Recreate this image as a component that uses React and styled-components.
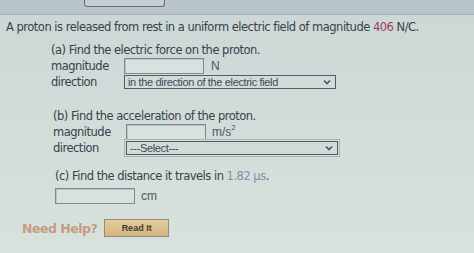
import React from "react";
import styled, { createGlobalStyle } from "styled-components";

const Global = createGlobalStyle`
  html, body { margin: 0; padding: 0; }
  body { background: #cfd8d5; }
`;

const Page = styled.div`
  width: 474px;
  height: 253px;
  overflow: hidden;
  background: linear-gradient(180deg, #ccd6d5 0%, #d3dcd9 50%, #d9e1dd 100%);
  font-family: "DejaVu Sans", Verdana, sans-serif;
  color: #35424c;
`;

const TopStrip = styled.div`
  height: 15px;
  background: #bac4cb;
  border-bottom: 1px solid #a8b2b9;
  padding-left: 84px;
  box-sizing: border-box;
`;

const TopButton = styled.div`
  width: 79px;
  height: 6px;
  border: 1px solid #5f6e7a;
  border-top: none;
  border-radius: 0 0 3px 3px;
  background: #c6ced4;
`;

const Body = styled.div`
  padding: 5px 0 0 6px;
`;

const Text = styled.div`
  font-size: 11.5px;
  letter-spacing: -0.5px;
  line-height: 15px;
`;

const Red = styled.span`
  color: ${(p) => p.$c || "#9b3d5e"};
`;

const Part = styled.div`
  padding-left: ${(p) => p.$indent || 45}px;
  margin-top: ${(p) => p.$top || 0}px;
`;

const PartTitle = styled(Text)`
  margin-bottom: ${(p) => p.$gap || 0}px;
`;

const Row = styled.div`
  display: flex;
  align-items: center;
  height: ${(p) => p.$h || 16}px;
`;

const Label = styled.div`
  width: 73px;
  font-size: 11.5px;
  letter-spacing: -0.5px;
`;

const Input = styled.div`
  width: 78px;
  height: 14px;
  border: 1px solid #7a8994;
  background: #d9e1df;
  box-shadow: inset 1px 1px 0 #b8c3c6;
`;

const Unit = styled.div`
  margin-left: ${(p) => p.$gap || 6}px;
  font-family: "Liberation Sans", Arial, sans-serif;
  font-size: 12px;
  color: #4a5660;
`;

const Sup = styled.sup`
  font-size: 8px;
  vertical-align: 6px;
  line-height: 0;
`;

const Select = styled.div`
  width: 203px;
  height: 12px;
  border: 1px solid #4e5d6a;
  outline: ${(p) => (p.$double ? "1px solid #a8b4b8" : "none")};
  outline-offset: 1px;
  display: flex;
  align-items: center;
  justify-content: space-between;
  padding: 0 4px 0 3px;
  background: #d3dbd9;
  font-family: "Liberation Sans", Arial, sans-serif;
  font-size: 11px;
  letter-spacing: -0.35px;
  color: #3e4a54;
  box-sizing: content-box;
`;

const Chevron = () => (
  <svg width="8" height="6" viewBox="0 0 8 6">
    <path d="M1 1.5 L4 4.5 L7 1.5" fill="none" stroke="#4a5864" strokeWidth="1.6" />
  </svg>
);

const HelpRow = styled.div`
  display: flex;
  align-items: center;
  gap: 7px;
  padding-left: 16px;
  margin-top: 15px;
`;

const NeedHelp = styled.div`
  font-family: "DejaVu Sans", Verdana, sans-serif;
  font-weight: bold;
  font-size: 12.5px;
  letter-spacing: -0.5px;
  color: #c49c82;
`;

const ReadIt = styled.div`
  width: 63px;
  height: 16px;
  border: 1px solid #8e8e86;
  background: linear-gradient(180deg, #e2cc98 0%, #d4b67e 100%);
  display: flex;
  align-items: center;
  justify-content: center;
  font-family: "Liberation Sans", Arial, sans-serif;
  font-weight: bold;
  font-size: 9px;
  color: #3e3a36;
`;

export default function App() {
  return (
    <Page>
      <Global />
      <TopStrip>
        <TopButton />
      </TopStrip>
      <Body>
        <Text>
          A proton is released from rest in a uniform electric field of magnitude <Red>406</Red> N/C.
        </Text>
        <Part $top={8}>
          <PartTitle>(a) Find the electric force on the proton.</PartTitle>
          <Row $h={16}>
            <Label>magnitude</Label>
            <Input />
            <Unit $gap={7}>N</Unit>
          </Row>
          <Row $h={15}>
            <Label>direction</Label>
            <Select>
              <span>in the direction of the electric field</span>
              <Chevron />
            </Select>
          </Row>
        </Part>
        <Part $top={20} $indent={47}>
          <PartTitle>(b) Find the acceleration of the proton.</PartTitle>
          <Row $h={16}>
            <Label>magnitude</Label>
            <Input />
            <Unit>
              m/s<Sup>2</Sup>
            </Unit>
          </Row>
          <Row $h={15}>
            <Label>direction</Label>
            <Select $double>
              <span>---Select---</span>
              <Chevron />
            </Select>
          </Row>
        </Part>
        <Part $top={14} $indent={49}>
          <PartTitle $gap={4}>
            (c) Find the distance it travels in <Red $c="#8e8aa6">1.82 μs</Red>.
          </PartTitle>
          <Row $h={16}>
            <Input />
            <Unit>cm</Unit>
          </Row>
        </Part>
        <HelpRow>
          <NeedHelp>Need Help?</NeedHelp>
          <ReadIt>Read It</ReadIt>
        </HelpRow>
      </Body>
    </Page>
  );
}
